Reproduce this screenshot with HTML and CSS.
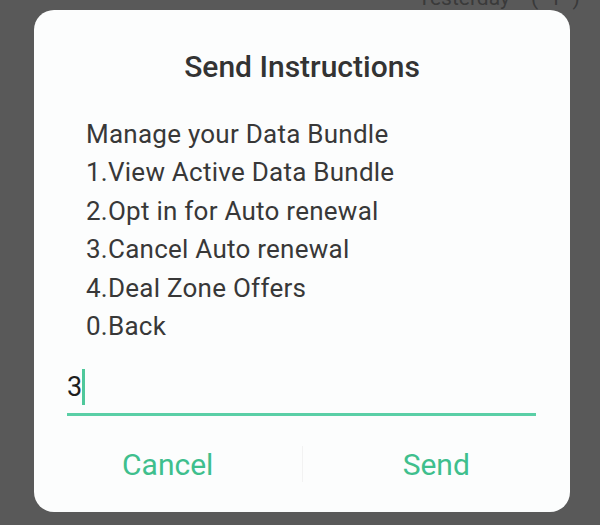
FILE: index.html
```html
<!DOCTYPE html>
<html lang="en">
<head>
<meta charset="utf-8">
<title>Send Instructions</title>
<link rel="stylesheet" href="styles.css">
</head>
<body>
<div class="backdrop-row">
  <span class="when">Yesterday</span>
  <span class="count">( 1 )</span>
</div>
<div class="dialog">
  <h1 class="title">Send Instructions</h1>
  <div class="message">
    <p>Manage your Data Bundle</p>
    <p>1.View Active Data Bundle</p>
    <p>2.Opt in for Auto renewal</p>
    <p>3.Cancel Auto renewal</p>
    <p>4.Deal Zone Offers</p>
    <p>0.Back</p>
  </div>
  <div class="field">
    <span class="value">3</span><span class="caret"></span>
  </div>
  <div class="actions">
    <button class="action">Cancel</button>
    <span class="sep"></span>
    <button class="action">Send</button>
  </div>
</div>
</body>
</html>
```

FILE: styles.css
```css
html, body {
  margin: 0;
  padding: 0;
}

body {
  width: 600px;
  height: 525px;
  background: #595959;
  font-family: Roboto, "Noto Sans", sans-serif;
  overflow: hidden;
  position: relative;
}

/* list row peeking out behind the dim layer */
.backdrop-row {
  position: absolute;
  top: -14px;
  left: 0;
  right: 0;
  height: 24px;
  font-size: 21px;
  line-height: 24px;
  color: #3a3a3a;
}

.backdrop-row .when {
  position: absolute;
  left: 418px;
  top: 0;
}

.backdrop-row .count {
  position: absolute;
  left: 531px;
  top: 0;
  letter-spacing: 3px;
}

.dialog {
  position: relative;
  margin: 10px 0 0 34px;
  width: 536px;
  height: 502px;
  background: #fcfdfd;
  border-radius: 20px;
  box-sizing: border-box;
  padding: 0 34px 0 33px;
  display: flex;
  flex-direction: column;
}

.title {
  margin: 38px 0 0;
  text-align: center;
  font-size: 30px;
  font-weight: 500;
  color: #333333;
  line-height: 38px;
  padding-left: 1px;
}

.message {
  margin-top: 29px;
  padding-left: 19px;
  color: #383838;
  font-size: 26px;
  letter-spacing: 0.25px;
  line-height: 38.4px;
}

.message p {
  margin: 0;
}

.field {
  margin-top: 20px;
  height: 44px;
  border-bottom: 3px solid #5acfa6;
  display: flex;
  align-items: center;
  padding-bottom: 4px;
}

.field .value {
  font-size: 27px;
  color: #1e1e1e;
  line-height: 30px;
}

.field .caret {
  width: 3px;
  height: 36px;
  background: #4fc89b;
  margin-left: 0;
}

.actions {
  margin-top: 13px;
  height: 70px;
  display: flex;
  align-items: center;
  margin-left: -33px;
  margin-right: -34px;
}

.action {
  flex: 1;
  background: none;
  border: 0;
  padding: 0;
  font-family: Roboto, "Noto Sans", sans-serif;
  font-size: 30px;
  color: #3fbf8d;
  height: 70px;
}

.sep {
  width: 1px;
  height: 36px;
  background: #f2f2f2;
}
```
